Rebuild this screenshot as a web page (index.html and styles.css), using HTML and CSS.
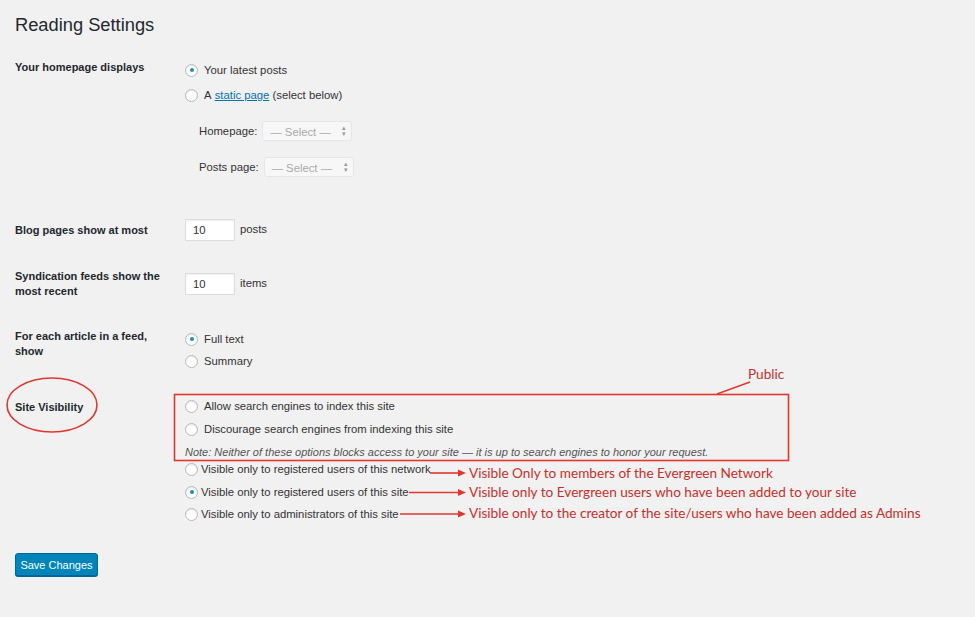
FILE: index.html
```html
<!DOCTYPE html>
<html>
<head>
<meta charset="utf-8">
<link rel="stylesheet" href="styles.css">
</head>
<body>
<div class="wrap">
  <h1 class="title">Reading Settings</h1>

  <div class="row row-home">
    <div class="th">Your homepage displays</div>
    <div class="td">
      <label class="opt"><span class="radio on"></span>Your latest posts</label>
      <label class="opt opt-gap"><span class="radio"></span>A&nbsp;<a href="#" class="link">static page</a>&nbsp;(select below)</label>
      <div class="sub sub-1"><span class="sub-label">Homepage:</span><span class="select">— Select —<span class="arrows">▴<br>▾</span></span></div>
      <div class="sub sub-2"><span class="sub-label">Posts page:</span><span class="select">— Select —<span class="arrows">▴<br>▾</span></span></div>
    </div>
  </div>

  <div class="row row-blog">
    <div class="th th-mid">Blog pages show at most</div>
    <div class="td inline"><span class="num">10</span><span class="unit">posts</span></div>
  </div>

  <div class="row row-synd">
    <div class="th">Syndication feeds show the most recent</div>
    <div class="td inline td-synd"><span class="num">10</span><span class="unit">items</span></div>
  </div>

  <div class="row row-feed">
    <div class="th">For each article in a feed, show</div>
    <div class="td td-feed">
      <label class="opt"><span class="radio on"></span>Full text</label>
      <label class="opt opt-gap3"><span class="radio"></span>Summary</label>
    </div>
  </div>

  <div class="row row-vis">
    <div class="th">Site Visibility</div>
    <div class="td td-vis">
      <label class="opt"><span class="radio"></span>Allow search engines to index this site</label>
      <label class="opt opt-gap2"><span class="radio"></span>Discourage search engines from indexing this site</label>
      <p class="note">Note: Neither of these options blocks access to your site — it is up to search engines to honor your request.</p>
      <label class="opt opt-tight n1"><span class="radio"></span>Visible only to registered users of this network</label>
      <label class="opt opt-tight n2"><span class="radio on"></span>Visible only to registered users of this site</label>
      <label class="opt opt-tight n3"><span class="radio"></span>Visible only to administrators of this site</label>
    </div>
  </div>

  <button class="save">Save Changes</button>
</div>

<div class="annot">
  <svg class="annot-svg" width="975" height="617" viewBox="0 0 975 617">
    <ellipse cx="52" cy="405" rx="45" ry="27" fill="none" stroke="#e0372f" stroke-width="1.6"/>
    <rect x="174.5" y="394.5" width="614" height="66" fill="none" stroke="#e0372f" stroke-width="1.6"/>
    <line x1="717" y1="394" x2="750" y2="382" stroke="#e0372f" stroke-width="1.6"/>
    <line x1="430" y1="473" x2="460" y2="473" stroke="#e0372f" stroke-width="1.6"/>
    <polygon points="458,469.5 466,473 458,476.5" fill="#e0372f"/>
    <line x1="409" y1="492.5" x2="460" y2="492.5" stroke="#e0372f" stroke-width="1.6"/>
    <polygon points="458,489 466,492.5 458,496" fill="#e0372f"/>
    <line x1="400" y1="514" x2="460" y2="514" stroke="#e0372f" stroke-width="1.6"/>
    <polygon points="458,510.5 466,514 458,517.5" fill="#e0372f"/>
  </svg>
  <span class="note-text t-public">Public</span>
  <span class="note-text t1">Visible Only to members of the Evergreen Network</span>
  <span class="note-text t2">Visible only to Evergreen users who have been added to your site</span>
  <span class="note-text t3">Visible only to the creator of the site/users who have been added as Admins</span>
</div>
</body>
</html>
```

FILE: styles.css
```css
html, body {
  margin: 0;
  padding: 0;
  background: #f1f1f1;
}
body {
  width: 975px;
  height: 617px;
  overflow: hidden;
  position: relative;
  font-family: "Liberation Sans", Arial, sans-serif;
  font-size: 11.3px;
  color: #444;
}
.wrap {
  padding: 0 15px;
}
.title {
  margin: 0;
  padding-top: 13px;
  font-size: 18.3px;
  font-weight: normal;
  line-height: 24px;
  color: #23282d;
}
.row {
  display: flex;
}
.th {
  width: 170px;
  flex: none;
  font-weight: bold;
  font-size: 11px;
  color: #23282d;
  line-height: 15px;
  padding-right: 10px;
  box-sizing: border-box;
}
.td {
  flex: 1;
}
.row-home { margin-top: 21px; }
.row-home .th { padding-top: 2px; }
.opt {
  display: flex;
  align-items: center;
  height: 18px;
  line-height: 18px;
  color: #333;
}
.row-home .td { padding-top: 3px; }
.opt-gap { margin-top: 7px; }
.opt-gap2 { margin-top: 5px; }
.opt-gap3 { margin-top: 4px; }
.radio {
  width: 11px;
  height: 11px;
  border: 1px solid #b4b9be;
  border-radius: 50%;
  background: #fff;
  box-shadow: inset 0 1px 2px rgba(0,0,0,0.1);
  margin-right: 6px;
  position: relative;
  flex: none;
}
.radio.on::after {
  content: "";
  position: absolute;
  left: 3.5px;
  top: 3.5px;
  width: 4px;
  height: 4px;
  border-radius: 50%;
  background: #1e8cbe;
}
.link {
  color: #0073aa;
  text-decoration: underline;
}
.sub {
  display: flex;
  align-items: center;
  padding-left: 14px;
  color: #333;
}
.sub-1 { margin-top: 17px; }
.sub-2 { margin-top: 16px; }
.sub-label { margin-right: 5px; }
.select {
  position: relative;
  display: inline-block;
  width: 90px;
  height: 20px;
  line-height: 20px;
  box-sizing: border-box;
  padding-left: 7px;
  background: #f7f7f7;
  border: 1px solid #e6e6e6;
  border-radius: 3px;
  color: #aaa;
}
.arrows {
  position: absolute;
  right: 5px;
  top: 3px;
  font-size: 7px;
  line-height: 6px;
  color: #999;
}
.inline {
  display: flex;
  align-items: center;
}
.num {
  display: inline-block;
  width: 50px;
  height: 22px;
  line-height: 20px;
  box-sizing: border-box;
  border: 1px solid #ddd;
  background: #fff;
  padding-left: 7px;
  color: #333;
  box-shadow: inset 0 1px 2px rgba(0,0,0,0.07);
}
.unit {
  margin-left: 5px;
  color: #333;
  position: relative;
  top: -1px;
}
.row-blog { margin-top: 42px; align-items: center; }
.row-synd { margin-top: 28px; }
.row-feed { margin-top: 30px; }
.td-feed { padding-top: 1px; }
.row-vis { margin-top: 27px; }
.row-vis .th { padding-top: 3px; }
.note {
  margin: 5px 0 0 0;
  font-style: italic;
  color: #555;
  font-size: 11px;
  line-height: 18px;
}
.opt-tight .radio { margin-right: 3px; }
.n1 { margin-top: -1px; }
.n2 { margin-top: 5px; }
.n3 { margin-top: 4px; }
.save {
  display: block;
  margin-top: 30px;
  width: 83px;
  height: 23px;
  padding: 0;
  background: #0085ba;
  border: 1px solid #006799;
  border-radius: 3px;
  color: #fff;
  font-family: "Liberation Sans", Arial, sans-serif;
  font-size: 11px;
  box-shadow: 0 1px 0 #006799;
}
.annot {
  position: absolute;
  left: 0;
  top: 0;
  width: 975px;
  height: 617px;
  pointer-events: none;
}
.annot-svg {
  position: absolute;
  left: 0;
  top: 0;
}
.note-text {
  position: absolute;
  font-family: Lato, "Open Sans", sans-serif;
  font-size: 13.6px;
  line-height: 16px;
  color: #c8302a;
  white-space: nowrap;
}
.t-public { left: 748px; top: 366px; }
.t1 { left: 469px; top: 465px; }
.t2 { left: 469px; top: 484px; }
.t3 { left: 469px; top: 505px; }
```
